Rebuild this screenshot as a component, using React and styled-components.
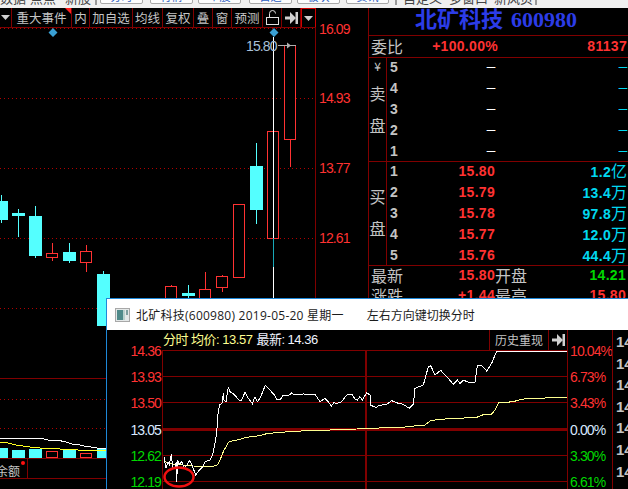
import React from 'react'
import styled, { createGlobalStyle } from 'styled-components'

const DARK_RED = '#800000'
const RED = '#ff3232'
const CYAN = '#54ffff'
const GREEN = '#00d800'
const QUOTE_CYAN = '#00d8f0'
const GREY = '#c4c4c4'
const CJK = '"Noto Sans CJK SC", sans-serif'
const NUM = '"Liberation Sans", "Noto Sans CJK SC", sans-serif'

const GlobalStyle = createGlobalStyle`
  html, body {
    margin: 0;
    padding: 0;
    background: #000;
    overflow: hidden;
  }
`

const Screen = styled.div`
  position: relative;
  width: 628px;
  height: 489px;
  overflow: hidden;
  background: #000;
  font-family: ${CJK};
`

/* clipped menu strip along the top edge */
const Strip = styled.div`
  display: flex;
  align-items: flex-end;
  box-sizing: border-box;
  height: 8px;
  padding-bottom: 3px;
  overflow: hidden;
  background: #f0f0f0;
`

const StripText = styled.span`
  flex: none;
  width: ${(p) => p.$w}px;
  margin-left: ${(p) => p.$ml || 0}px;
  font-size: 13px;
  line-height: 14px;
  height: 14px;
  color: #444;
  white-space: nowrap;
`

const StripTab = styled.span`
  flex: none;
  box-sizing: border-box;
  width: 43px;
  height: 14px;
  margin-left: ${(p) => p.$ml}px;
  margin-bottom: 1px;
  border: 1px solid #a8a8a8;
  border-radius: 2px;
  background: #fdfdfd;
  color: #2a5cc0;
  font-size: 11px;
  line-height: 10px;
  text-align: center;
`

const StripBar = styled.span`
  flex: none;
  width: 2px;
  height: 8px;
  margin-left: ${(p) => p.$ml}px;
  background: #999;
`

const Body = styled.div`
  display: flex;
  height: 481px;
`

const ChartColumn = styled.div`
  flex: none;
  width: 368px;
`

const Toolbar = styled.div`
  display: flex;
  box-sizing: border-box;
  width: 316px;
  height: 20px;
  border-bottom: 1px solid ${DARK_RED};
`

const ToolButton = styled.div`
  position: relative;
  flex: none;
  display: flex;
  align-items: center;
  justify-content: center;
  box-sizing: border-box;
  width: ${(p) => p.$w}px;
  border-right: 1px solid ${DARK_RED};
  color: ${GREY};
  font-size: 12.5px;
  line-height: 19px;
  white-space: nowrap;
  ${(p) => p.$active && `border: 1px solid #d00000; border-bottom: none;`}
`

const NewsFlag = styled.span`
  position: absolute;
  top: 0;
  right: 0;
  border-top: 6px solid #ff2020;
  border-left: 6px solid transparent;
`

const MainChart = styled.svg`
  display: block;
  overflow: visible;
`

const AxisLabel = styled.text`
  font-family: ${NUM};
  font-size: 14px;
  letter-spacing: -0.9px;
  fill: ${(p) => p.$color};
  dominant-baseline: central;
`

const SmallLabel = styled.text`
  font-family: ${CJK};
  font-size: 12px;
  fill: ${GREY};
  dominant-baseline: central;
`

/* order book on the right */
const QuotePanel = styled.div`
  flex: none;
  box-sizing: border-box;
  width: 260px;
  height: 481px;
  border-left: 1px solid ${DARK_RED};
`

const StockTitle = styled.div`
  height: 27px;
  margin-left: -5px;
  text-align: center;
  font-family: "Liberation Serif", ${CJK};
  font-size: 22px;
  font-weight: 700;
  line-height: 24px;
  color: #2c3ce8;
  white-space: nowrap;
  span {
    margin-left: 8px;
  }
`

const RatioRow = styled.div`
  display: grid;
  grid-template-columns: 44px 83px 1fr;
  align-items: center;
  box-sizing: border-box;
  height: 23px;
  padding: 0 1px 1px 2px;
  border-top: 1px solid ${DARK_RED};
  border-bottom: 1px solid ${DARK_RED};
`

const BookSection = styled.div`
  display: flex;
  height: ${(p) => p.$h}px;
  border-bottom: 1px solid ${DARK_RED};
`

const SideLabel = styled.div`
  flex: none;
  display: flex;
  flex-direction: column;
  align-items: center;
  box-sizing: border-box;
  width: 18px;
  padding-top: ${(p) => p.$pt}px;
  border-right: 1px solid ${DARK_RED};
  color: ${GREY};
  font-size: 16px;
  line-height: 32px;
`

const Yen = styled.span`
  height: 16px;
  margin-bottom: 3px;
  font-size: 12px;
  line-height: 16px;
`

const BookRows = styled.div`
  flex: 1;
  margin-top: -1px;
`

const BookRow = styled.div`
  display: grid;
  grid-template-columns: 34px 71px 1fr;
  align-items: center;
  height: 20.9px;
  padding: 0 1px 0 3px;
`

const Num = styled.span`
  font-family: ${NUM};
  font-size: 14px;
  font-weight: 700;
  letter-spacing: 0.3px;
  line-height: 18px;
  text-align: ${(p) => p.$align || 'right'};
  color: ${(p) => p.$color};
  white-space: nowrap;
`

const Dash = styled.span`
  font-family: ${NUM};
  font-size: 8px;
  font-weight: 700;
  line-height: 18px;
  text-align: right;
  color: ${(p) => p.$color};
  -webkit-text-stroke: 0.5px ${(p) => p.$color};
`

const Unit = styled.span`
  font-family: ${CJK};
  font-size: 16px;
  font-weight: 400;
  line-height: 18px;
  letter-spacing: 0;
`

const Caption = styled.span`
  font-size: 16px;
  line-height: 20px;
  color: ${GREY};
  white-space: nowrap;
`

const SummaryRow = styled.div`
  display: grid;
  grid-template-columns: 36px 88px 38px 1fr;
  align-items: center;
  height: 20px;
  padding: 0 2px;
  transform: translateY(-1px);
`

/* floating minute chart window */
const Popup = styled.div`
  position: absolute;
  left: 106px;
  top: 298px;
  box-sizing: border-box;
  width: 522px;
  height: 191px;
  border-top: 1px solid #1e88d8;
  border-left: 1px solid #1e88d8;
  background: #000;
`

const PopupTitle = styled.div`
  display: flex;
  align-items: center;
  height: 31px;
  padding-left: 8px;
  background: #fff;
  color: #1c1c1c;
  font-family: "Open Sans", ${CJK};
  font-size: 12px;
  white-space: nowrap;
`

const TitleText = styled.span`
  margin-left: ${(p) => p.$ml}px;
  letter-spacing: ${(p) => p.$ls || 0}px;
`

const PopupBody = styled.div`
  display: flex;
  height: 159px;
`

const MinuteColumn = styled.div`
  flex: none;
  width: 505px;
`

const InfoBar = styled.div`
  display: flex;
  align-items: stretch;
  height: 20px;
  width: 461px;
`

const InfoText = styled.div`
  flex: 1;
  padding-left: 56px;
  font-family: ${NUM};
  font-size: 13px;
  letter-spacing: -0.5px;
  line-height: 19px;
  white-space: nowrap;
`

const InfoPart = styled.span`
  color: ${(p) => p.$color};
  margin-right: 4px;
`

const HistoryButton = styled.div`
  flex: none;
  box-sizing: border-box;
  width: 59px;
  border-left: 1px solid ${DARK_RED};
  color: ${GREY};
  font-size: 12px;
  line-height: 19px;
  text-align: center;
`

const JumpButton = styled.div`
  flex: none;
  display: flex;
  align-items: center;
  justify-content: center;
  box-sizing: border-box;
  width: 20px;
  border-left: 1px solid ${DARK_RED};
  border-right: 1px solid ${DARK_RED};
`

const MinuteChart = styled.svg`
  display: block;
  overflow: visible;
`

const SideQuotes = styled.div`
  flex: none;
  box-sizing: border-box;
  width: 16px;
  padding: 1px 0 0 3px;
  border-left: 1px solid ${DARK_RED};
  overflow: hidden;
  font-family: ${NUM};
  font-size: 15px;
  font-weight: 700;
  line-height: 21.6px;
  color: ${GREY};
`

const candles = [
  { x: 0, w: 8, top: 201, bottom: 220, hi: 195, lo: 223, wick: 1 },
  { x: 12, w: 13, top: 213, bottom: 216, hi: 209, lo: 237 },
  { x: 29, w: 13, top: 216, bottom: 256, hi: 206, lo: 258 },
  { x: 46, w: 12, top: 253, bottom: 257, hi: 243, lo: 261, up: true },
  { x: 63, w: 13, top: 252, bottom: 261, hi: 243, lo: 263 },
  { x: 80, w: 12, top: 251, bottom: 262, hi: 245, lo: 272, up: true },
  { x: 97, w: 13, top: 274, bottom: 326, hi: 271, lo: 326 },
  { x: 165, w: 12, top: 286, bottom: 310, hi: 285, lo: 310, up: true },
  { x: 182, w: 13, top: 293, bottom: 296, hi: 285, lo: 310 },
  { x: 199, w: 12, top: 289, bottom: 298, hi: 272, lo: 298, up: true },
  { x: 216, w: 12, top: 276, bottom: 287, hi: 275, lo: 292, up: true },
  { x: 233, w: 12, top: 204, bottom: 277, hi: 204, lo: 277, up: true },
  { x: 250, w: 13, top: 166, bottom: 210, hi: 143, lo: 224 },
  { x: 267, w: 12, top: 131, bottom: 238, hi: 131, lo: 238, up: true },
  { x: 284, w: 12, top: 45, bottom: 139, hi: 45, lo: 167, up: true },
]

const volumeBars = [
  { x: 0, w: 8, top: 448 },
  { x: 12, w: 13, top: 450 },
  { x: 29, w: 13, top: 449 },
  { x: 46, w: 12, top: 451, up: true },
  { x: 63, w: 13, top: 449 },
  { x: 80, w: 12, top: 453, up: true },
  { x: 97, w: 9, top: 448 },
]

const axisLabels = [
  ['16.09', 29],
  ['14.93', 98],
  ['13.77', 168],
  ['12.61', 238],
]

const dottedRows = [28, 98, 168, 238, 308, 399, 428]

// points read off the 3x crops, origin then crop coordinate / 3
const fromCrop = (pts, ox, oy) =>
  pts.map(([x, y]) => `${ox + x / 3},${oy + y / 3}`).join(' ')

const pricePoints = [
  fromCrop(
    [
      [12, 337], [18, 368], [24, 350], [28, 358], [34, 328], [38, 368], [44, 372], [49, 350], [50, 412], [53, 345],
      [58, 358], [66, 350], [72, 368], [80, 362], [88, 346], [95, 358], [107, 390], [118, 375], [128, 365], [136, 350],
      [150, 345], [158, 330], [164, 300], [170, 265], [175, 195], [180, 178], [186, 175], [190, 145], [192, 165],
      [198, 170], [205, 125], [210, 140], [222, 148], [238, 166], [245, 165], [255, 142], [265, 160], [277, 176],
      [285, 155], [292, 170], [300, 160], [316, 121], [325, 130], [345, 152], [350, 162], [362, 162], [368, 152],
      [385, 152], [395, 144], [405, 150], [430, 147], [465, 148], [480, 170], [495, 160], [505, 170], [514, 184],
      [522, 172], [530, 176], [545, 170], [560, 150], [575, 147], [585, 162], [592, 165], [600, 155], [607, 165],
      [620, 143], [630, 150],
    ],
    160,
    345
  ),
  fromCrop(
    [
      [0, 330], [20, 338], [25, 332], [50, 328], [65, 317], [85, 325], [100, 328], [118, 340], [130, 328], [135, 280],
      [160, 270], [175, 215], [182, 212], [195, 240], [212, 226], [235, 250], [250, 268], [262, 255], [270, 265],
      [280, 255], [295, 262], [315, 262], [322, 212], [335, 212], [350, 228], [365, 205], [380, 168], [590, 168],
    ],
    370,
    295
  ),
].join(' ')

const averagePoints = [
  fromCrop(
    [
      [12, 345], [20, 352], [40, 357], [70, 360], [100, 363], [130, 365], [160, 364], [172, 360], [180, 345], [190, 320],
      [205, 292], [215, 288], [240, 283], [260, 277], [300, 272], [320, 266], [350, 263], [400, 259], [450, 257],
      [510, 255], [590, 252], [630, 250],
    ],
    160,
    345
  ),
  fromCrop(
    [
      [0, 131], [40, 128], [105, 126], [140, 122], [165, 120], [180, 108], [205, 103], [320, 97], [340, 89], [365, 87],
      [375, 75], [385, 54], [430, 50], [450, 44], [470, 41], [525, 39], [590, 37],
    ],
    370,
    385
  ),
].join(' ')

const minuteRows = [
  { y: 350, price: '14.36', pct: '10.04%', color: '#ff3232' },
  { y: 376, price: '13.93', pct: '6.73%', color: '#ff3232' },
  { y: 402, price: '13.50', pct: '3.43%', color: '#ff3232' },
  { y: 429, price: '13.05', pct: '0.00%', color: '#d8e8ff', thick: true },
  { y: 455, price: '12.62', pct: '3.30%', color: GREEN },
  { y: 481, price: '12.19', pct: '6.61%', color: GREEN },
]

const sellRows = ['5', '4', '3', '2', '1']
const buyRows = [
  ['1', '15.80', '1.2', '亿'],
  ['2', '15.79', '13.4', '万'],
  ['3', '15.78', '97.8', '万'],
  ['4', '15.77', '12.0', '万'],
  ['5', '15.76', '44.4', '万'],
]

const JumpIcon = () => (
  <svg width="13" height="12" viewBox="0 0 13 12">
    <path d="M0 4.5h5V0l6 6-6 6V7.5H0z" fill="#d0d0d0" />
    <rect x="10.5" y="0" width="2.5" height="12" fill="#d0d0d0" />
  </svg>
)

const Caret = () => (
  <svg width="9" height="5" viewBox="0 0 9 5">
    <path d="M0 0h9L4.5 5z" fill="#d0d0d0" />
  </svg>
)

const LockIcon = () => (
  <svg width="13" height="15" viewBox="0 0 13 15">
    <path d="M3.5 7V3.5a3 3 0 0 1 6 0" fill="none" stroke="#e0e0e0" />
    <rect x="0.5" y="7.5" width="12" height="7" fill="none" stroke="#e0e0e0" />
  </svg>
)

const WindowIcon = () => (
  <svg width="15" height="14" viewBox="0 0 15 14">
    <rect x="0.5" y="0.5" width="14" height="13" fill="#e4e8e8" stroke="#a8a8a8" />
    <rect x="2" y="2" width="6" height="10" fill="#4f8a8a" />
    <rect x="8" y="2" width="2" height="10" fill="#b8d0cc" />
    <rect x="11" y="2" width="2" height="5" fill="#7fa0a0" />
  </svg>
)

const Candle = ({ x, w, top, bottom, hi, lo, up, wick }) => {
  const color = up ? RED : CYAN
  const cx = wick ?? x + Math.floor(w / 2)
  return (
    <g shapeRendering="crispEdges">
      <rect x={cx} y={hi} width="1" height={lo - hi} fill={color} />
      {up ? (
        <rect x={x + 0.5} y={top + 0.5} width={w - 1} height={bottom - top} fill="#000" stroke={color} />
      ) : (
        <rect x={x} y={top} width={w} height={bottom - top} fill={color} />
      )}
    </g>
  )
}

const KLineChart = () => (
  <MainChart width="368" height="461" viewBox="0 28 368 461">
    {dottedRows.map((y) => (
      <line key={y} x1="0" x2="315" y1={y + 0.5} y2={y + 0.5} stroke="#b00000" strokeDasharray="1 3" />
    ))}
    <g shapeRendering="crispEdges">
      <rect x="315" y="28" width="1" height="270" fill={DARK_RED} />
      <rect x="0" y="378" width="106" height="1" fill={DARK_RED} />
      <rect x="0" y="458" width="106" height="1" fill={DARK_RED} />
      <rect x="0" y="478" width="106" height="1" fill={DARK_RED} />
      <rect x="27" y="459" width="1" height="19" fill={DARK_RED} />
    </g>

    <path d="M53 28l4.5 4.5L53 37l-4.5-4.5zM274 28l4.5 4.5L274 37l-4.5-4.5z" fill="#3aa0d4" />

    {candles.map((c) => (
      <Candle key={c.x} {...c} />
    ))}

    <g shapeRendering="crispEdges">
      <rect x="273" y="37" width="1" height="201" fill="#fff" />
      <rect x="273" y="238" width="1" height="29" fill="#18a8b8" />
      <rect x="273" y="267" width="1" height="31" fill="#fff" />
      <rect x="278" y="45" width="18" height="1" fill="#b0b0b0" />
    </g>
    <path d="M287 42.5l4 3-4 3z" fill="#b0b0b0" />
    <AxisLabel x="246" y="45.5" $color="#a8c0d8">15.80</AxisLabel>

    {axisLabels.map(([label, y]) => (
      <AxisLabel key={label} x="319" y={y} $color={RED}>{label}</AxisLabel>
    ))}

    {volumeBars.map((b) =>
      b.up ? (
        <rect key={b.x} x={b.x + 0.5} y={b.top + 0.5} width={b.w - 1} height={457 - b.top} fill="none" stroke={RED} shapeRendering="crispEdges" />
      ) : (
        <rect key={b.x} x={b.x} y={b.top} width={b.w} height={458 - b.top} fill={CYAN} shapeRendering="crispEdges" />
      )
    )}
    <polyline
      points="0,438 40,438 48,440 57,440 66,442 72,444 80,445 84,446 91,447 97,448 106,448"
      fill="none"
      stroke="#fff"
      shapeRendering="crispEdges"
    />
    <polyline
      points="0,442 8,443 12,444 16,445 23,446 30,447 40,448 60,449 78,450 106,450"
      fill="none"
      stroke="#ffff20"
      shapeRendering="crispEdges"
    />

    <SmallLabel x="-4" y="470">余额</SmallLabel>
    <circle cx="23" cy="463" r="2" fill="#ff1010" />
  </MainChart>
)

const MinutePlot = () => (
  <MinuteChart width="505" height="139" viewBox="107 350 505 139">
    <g shapeRendering="crispEdges">
      {minuteRows.map((r) => (
        <rect key={r.y} x="162" y={r.thick ? r.y - 1 : r.y} width="405" height={r.thick ? 3 : 1} fill={DARK_RED} />
      ))}
      <rect x="162" y="350" width="1" height="139" fill={DARK_RED} />
      <rect x="365" y="350" width="2" height="139" fill={DARK_RED} />
      <rect x="567" y="350" width="1" height="139" fill={DARK_RED} />
    </g>
    {minuteRows.map((r) => (
      <g key={r.price}>
        <AxisLabel x="161" y={r.y + 1} textAnchor="end" $color={r.color}>{r.price}</AxisLabel>
        <AxisLabel x="570" y={r.y + 1} $color={r.color}>{r.pct}</AxisLabel>
      </g>
    ))}
    <polyline points={averagePoints} fill="none" stroke="#ffff90" shapeRendering="crispEdges" />
    <polyline points={pricePoints} fill="none" stroke="#fff" shapeRendering="crispEdges" />
    <ellipse cx="179" cy="477" rx="14.5" ry="9.5" fill="none" stroke="#f01010" strokeWidth="2.5" />
  </MinuteChart>
)

const StripMenu = () => (
  <Strip>
    <StripText $w={30}>数据</StripText>
    <StripText $w={35}>点点</StripText>
    <StripText $w={30}>新股</StripText>
    <StripBar $ml={0} />
    <StripTab $ml={3}>分时</StripTab>
    <StripTab $ml={7}>行情</StripTab>
    <StripTab $ml={5}>个股</StripTab>
    <StripTab $ml={8}>自选</StripTab>
    <StripTab $ml={5}>板块</StripTab>
    <StripTab $ml={6}>资讯</StripTab>
    <StripBar $ml={6} />
    <StripText $w={46} $ml={6}>自定义</StripText>
    <StripText $w={45}>多窗口</StripText>
    <StripText $w={41}>新风页</StripText>
    <StripBar $ml={0} />
  </Strip>
)

const ChartToolbar = () => (
  <Toolbar>
    <ToolButton $w={12}><Caret /></ToolButton>
    <ToolButton $w={60}>重大事件<NewsFlag /></ToolButton>
    <ToolButton $w={18}>内</ToolButton>
    <ToolButton $w={43}>加自选</ToolButton>
    <ToolButton $w={30}>均线</ToolButton>
    <ToolButton $w={31}>复权</ToolButton>
    <ToolButton $w={19}>叠</ToolButton>
    <ToolButton $w={19}>窗</ToolButton>
    <ToolButton $w={31}>预测</ToolButton>
    <ToolButton $w={19}><LockIcon /></ToolButton>
    <ToolButton $w={19}><JumpIcon /></ToolButton>
    <ToolButton $w={15} $active><Caret /></ToolButton>
  </Toolbar>
)

const OrderBook = () => (
  <QuotePanel>
    <StockTitle>北矿科技<span>600980</span></StockTitle>
    <RatioRow>
      <Caption>委比</Caption>
      <Num $color={RED}>+100.00%</Num>
      <Num $color={RED}>81137</Num>
    </RatioRow>
    <BookSection $h={103}>
      <SideLabel $pt={0}>
        <Yen>¥</Yen>
        <span>卖</span>
        <span>盘</span>
      </SideLabel>
      <BookRows>
        {sellRows.map((n) => (
          <BookRow key={n}>
            <Num $color={GREY} $align="left">{n}</Num>
            <Dash $color="#fff">—</Dash>
            <Dash $color={QUOTE_CYAN}>—</Dash>
          </BookRow>
        ))}
      </BookRows>
    </BookSection>
    <BookSection $h={103}>
      <SideLabel $pt={18}>
        <span>买</span>
        <span>盘</span>
      </SideLabel>
      <BookRows>
        {buyRows.map(([n, price, vol, unit]) => (
          <BookRow key={n}>
            <Num $color={GREY} $align="left">{n}</Num>
            <Num $color={RED}>{price}</Num>
            <Num $color={QUOTE_CYAN}>{vol}<Unit>{unit}</Unit></Num>
          </BookRow>
        ))}
      </BookRows>
    </BookSection>
    <SummaryRow>
      <Caption>最新</Caption>
      <Num $color={RED}>15.80</Num>
      <Caption>开盘</Caption>
      <Num $color={GREEN}>14.21</Num>
    </SummaryRow>
    <SummaryRow>
      <Caption>涨跌</Caption>
      <Num $color={RED}>+1.44</Num>
      <Caption>最高</Caption>
      <Num $color={RED}>15.80</Num>
    </SummaryRow>
  </QuotePanel>
)

const MinuteWindow = () => (
  <Popup>
    <PopupTitle>
      <WindowIcon />
      <TitleText $ml={6} $ls={0.25}>北矿科技(600980) 2019-05-20 星期一</TitleText>
      <TitleText $ml={23}>左右方向键切换分时</TitleText>
    </PopupTitle>
    <PopupBody>
      <MinuteColumn>
        <InfoBar>
          <InfoText>
            <InfoPart $color="#ffff90">分时 均价: 13.57</InfoPart>
            <InfoPart $color="#f0f4ff">最新: 14.36</InfoPart>
          </InfoText>
          <HistoryButton>历史重现</HistoryButton>
          <JumpButton><JumpIcon /></JumpButton>
        </InfoBar>
        <MinutePlot />
      </MinuteColumn>
      <SideQuotes>
        {[0, 1, 2, 3, 4, 5, 6].map((i) => (
          <div key={i}>14</div>
        ))}
      </SideQuotes>
    </PopupBody>
  </Popup>
)

export default function App() {
  return (
    <Screen>
      <GlobalStyle />
      <StripMenu />
      <Body>
        <ChartColumn>
          <ChartToolbar />
          <KLineChart />
        </ChartColumn>
        <OrderBook />
      </Body>
      <MinuteWindow />
    </Screen>
  )
}
